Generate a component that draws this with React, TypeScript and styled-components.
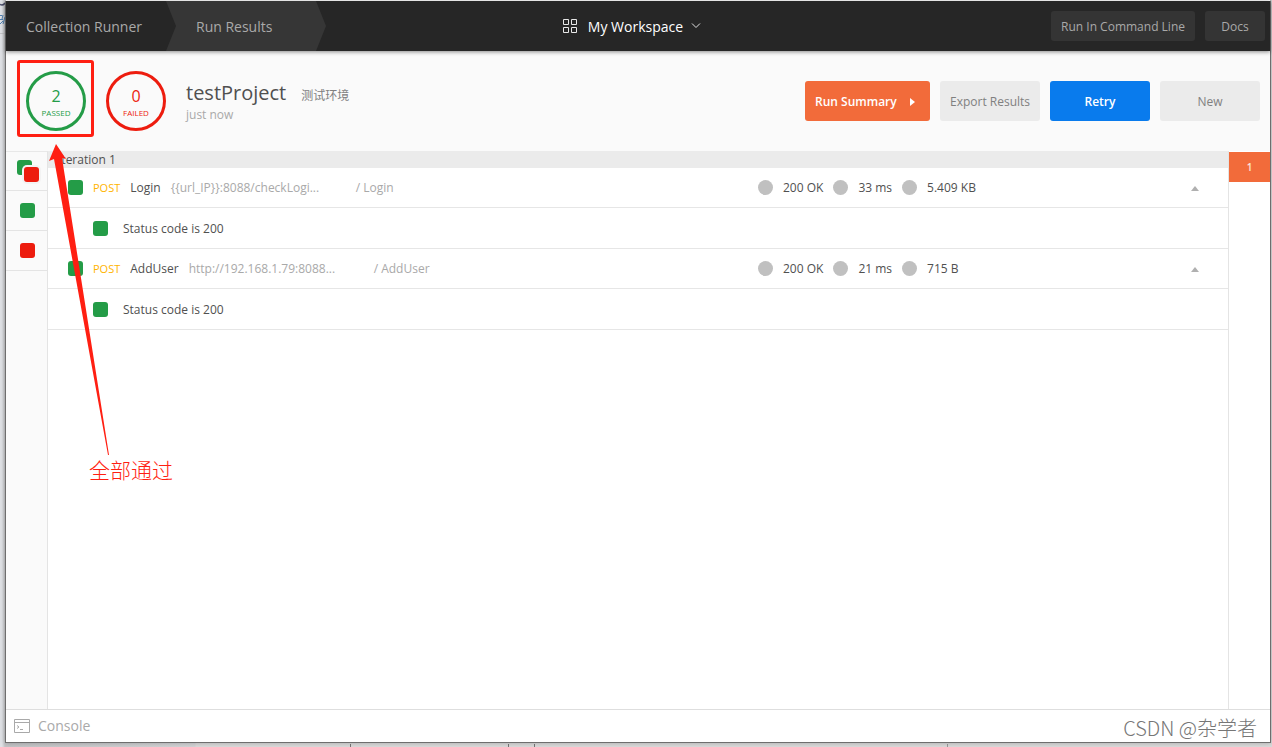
import React from "react";
import styled, { createGlobalStyle } from "styled-components";

const GREEN = "#249c47";
const RED = "#ed1c0e";
const MARK = "#ff1f12";
const ORANGE = "#f26b3a";

const GlobalStyle = createGlobalStyle`
  * { box-sizing: border-box; }
  body {
    margin: 0;
    background: #d9dadc;
    font-family: "Open Sans", "Noto Sans CJK SC", sans-serif;
    font-size: 12px;
    line-height: 16px;
    color: #505050;
  }
  button { font: inherit; border: 0; padding: 0; cursor: pointer; }
  a { color: inherit; text-decoration: none; }
  h1, p { margin: 0; font-weight: 400; }
`;

const Desktop = styled.div`
  position: relative;
  display: flex;
  min-height: 100vh;
  padding: 0 1px 4px 5px;
  overflow: hidden;
  background: linear-gradient(90deg, #dfe1e5 0 2px, #c2c3c5 5px, #d3d4d6 195px, #dadada 196px);
`;

const Behind = styled.svg`
  position: absolute;
  left: 0;
  top: 0;
`;

const BehindTicks = styled.div`
  position: absolute;
  left: 0;
  right: 0;
  bottom: 0;
  height: 3px;
  background:
    linear-gradient(#777, #777) 27.5% 0 / 1px 3px no-repeat,
    linear-gradient(#777, #777) 40% 0 / 1px 3px no-repeat,
    linear-gradient(#777, #777) 42% 0 / 1px 3px no-repeat,
    linear-gradient(#999, #999) 74.5% 0 / 1px 3px no-repeat;
`;

const Window = styled.div`
  position: relative;
  flex: 1;
  display: flex;
  flex-direction: column;
  background: #fff;
  border: 1px solid #6e6e6e;
  border-top-color: #fff;
  box-shadow: 0 0 5px rgba(0, 0, 0, 0.25);
`;

const Header = styled.header`
  position: relative;
  z-index: 1;
  display: grid;
  grid-template-columns: 1fr auto 1fr;
  align-items: center;
  height: 50px;
  background: #262626;
  box-shadow: 0 1px 4px rgba(0, 0, 0, 0.45);
`;

const Crumbs = styled.nav`
  display: flex;
  font-size: 14px;
  line-height: 52px;
  color: #a9a9a9;
`;

const Crumb = styled.a<{ $active?: boolean }>`
  width: ${(p) => (p.$active ? 160 : 170)}px;
  height: 50px;
  margin-right: -10px;
  padding-left: ${(p) => (p.$active ? 30 : 20)}px;
  background: ${(p) => (p.$active ? "#363636" : "transparent")};
  clip-path: ${(p) =>
    p.$active
      ? "polygon(0 0, calc(100% - 10px) 0, 100% 50%, calc(100% - 10px) 100%, 0 100%, 10px 50%)"
      : "none"};
`;

const Workspace = styled.button`
  display: flex;
  align-items: center;
  gap: 8px;
  padding-right: 12px;
  background: none;
  color: #fff;
  font-size: 14px;
  font-weight: 500;
`;

const WorkspaceName = styled.span`
  padding: 2px 0 0 2px;
`;

const HeaderActions = styled.div`
  display: flex;
  justify-content: flex-end;
  gap: 10px;
  padding-right: 5px;
`;

const HeaderButton = styled.button`
  min-width: 60px;
  height: 30px;
  padding: 2px 10px 0;
  border-radius: 3px;
  background: #343434;
  color: #a9a9a9;
`;

const Summary = styled.section`
  display: flex;
  align-items: center;
  height: 100px;
  padding: 0 10px 0 20px;
  background: #fafafa;
`;

const Count = styled.div<{ $color: string }>`
  display: flex;
  flex-direction: column;
  align-items: center;
  width: 60px;
  height: 60px;
  margin-right: 20px;
  padding-top: 11px;
  border: 3px solid ${(p) => p.$color};
  border-radius: 50%;
  color: ${(p) => p.$color};
`;

const CountValue = styled.span`
  font-size: 16px;
  line-height: 22px;
`;

const CountLabel = styled.span`
  font-size: 8px;
  line-height: 11px;
`;

const RunInfo = styled.div`
  flex: 1;
`;

const TitleLine = styled.div`
  display: flex;
  align-items: baseline;
  gap: 15px;
`;

const Title = styled.h1`
  font-size: 20px;
  line-height: 28px;
`;

const Environment = styled.span`
  color: #808080;
`;

const When = styled.p`
  color: #a9a9a9;
`;

const Actions = styled.div`
  display: flex;
  gap: 10px;
`;

const ActionButton = styled.button<{ $tone?: "orange" | "blue" }>`
  display: flex;
  align-items: center;
  justify-content: ${(p) => (p.$tone === "orange" ? "flex-start" : "center")};
  gap: 13px;
  width: ${(p) => (p.$tone === "orange" ? 125 : 100)}px;
  height: 40px;
  padding: 2px 10px 0;
  border-radius: 3px;
  white-space: nowrap;
  font-weight: ${(p) => (p.$tone ? 600 : 400)};
  background: ${(p) => (p.$tone === "orange" ? ORANGE : p.$tone === "blue" ? "#097bed" : "#ebebeb")};
  color: ${(p) => (p.$tone ? "#fff" : "#808080")};
`;

const Body = styled.main`
  flex: 1;
  display: flex;
`;

const Filters = styled.aside`
  width: 42px;
  background: #fafafa;
  border-top: 1px solid #e8e8e8;
  border-right: 1px solid #e4e4e4;
`;

const FilterButton = styled.button`
  display: flex;
  align-items: center;
  justify-content: center;
  width: 100%;
  height: 40px;
  padding-left: 2px;
  background: none;
  border-bottom: 1px solid #e4e4e4;

  &:first-child { height: 39px; }
`;

const Square = styled.span<{ $color: string }>`
  flex: none;
  width: 15px;
  height: 15px;
  border-radius: 3px;
  background: ${(p) => p.$color};
`;

const StackedSquares = styled.span`
  position: relative;
  display: flex;
  width: 22px;
  height: 22px;

  ${Square} + ${Square} {
    position: absolute;
    right: 0;
    bottom: 0;
    box-shadow: 0 0 0 2px #f3f3f3;
  }
`;

const Results = styled.section`
  flex: 1;
`;

const IterationTitle = styled.div`
  height: 17px;
  padding-left: 10px;
  line-height: 17px;
  background: #ebebeb;
`;

const RequestRow = styled.div`
  display: grid;
  grid-template-columns: 3fr 2fr;
  align-items: center;
  height: 40px;
  border-bottom: 1px solid #e6e6e6;
`;

const RequestInfo = styled.div`
  display: flex;
  align-items: center;
  gap: 10px;
  padding-left: 20px;
`;

const Method = styled.span`
  font-size: 11px;
  color: #ffb400;
`;

const Url = styled.span`
  width: 175px;
  color: #a9a9a9;
`;

const Path = styled.span`
  color: #a9a9a9;
`;

const Stats = styled.div`
  display: flex;
  align-items: center;
  gap: 10px;
  padding: 0 28px 0 2px;
`;

const Dot = styled.span`
  width: 15px;
  height: 15px;
  border-radius: 50%;
  background: #c0c0c0;
`;

const Collapse = styled.button`
  display: flex;
  margin-left: auto;
  background: none;
`;

const TestRow = styled.div`
  display: flex;
  align-items: center;
  gap: 15px;
  height: 41px;
  padding-left: 45px;
  border-bottom: 1px solid #e6e6e6;
`;

const TestName = styled.span`
  padding-top: 2px;
`;

const Iterations = styled.aside`
  width: 42px;
  padding-top: 1px;
  border-left: 1px solid #e4e4e4;
`;

const IterationButton = styled.button`
  width: 100%;
  height: 30px;
  background: ${ORANGE};
  color: #fbe3da;
  font-size: 10px;
  font-weight: 600;
`;

const Footer = styled.footer`
  display: flex;
  align-items: center;
  height: 33px;
  padding: 0 8px;
  border-top: 1px solid #dedede;
`;

const ConsoleButton = styled.button`
  display: flex;
  align-items: center;
  gap: 8px;
  background: none;
  color: #a9a9a9;
  font-size: 14px;
`;

const Highlight = styled.div`
  position: absolute;
  z-index: 2;
  left: 11px;
  top: 59px;
  width: 77px;
  height: 77px;
  border: 3px solid ${MARK};
  border-radius: 3px;
`;

const Arrow = styled.svg`
  position: absolute;
  z-index: 2;
  left: 42px;
  top: 142px;
  pointer-events: none;
`;

const Note = styled.div`
  position: absolute;
  z-index: 2;
  left: 83px;
  top: 453px;
  font-family: "Noto Sans CJK SC", sans-serif;
  font-size: 21px;
  font-weight: 300;
  line-height: 30px;
  color: ${MARK};
`;

const Watermark = styled.div`
  position: absolute;
  right: 13px;
  bottom: 0;
  font-family: "Noto Sans CJK SC", sans-serif;
  font-size: 20px;
  font-weight: 300;
  line-height: 28px;
  color: #767676;
`;

const requests = [
  { name: "Login", url: "{{url_IP}}:8088/checkLogi...", path: "/ Login", status: "200 OK", time: "33 ms", size: "5.409 KB" },
  { name: "AddUser", url: "http://192.168.1.79:8088...", path: "/ AddUser", status: "200 OK", time: "21 ms", size: "715 B" },
];

export default function App() {
  return (
    <Desktop>
      <GlobalStyle />
      <Behind width="5" height="36" fill="none" aria-hidden="true">
        <path d="M0 4.5Q3 6 5 3" stroke="#4a4d68" strokeWidth="1.5" />
        <path d="M0 15.5h2M0 19.5h3M3 15l-1 4M5 17l-2 7M0 24l3-3" stroke="#4f7fb0" />
        <path d="M0 33.5h5" stroke="#c4c5c8" />
      </Behind>
      <BehindTicks />
      <Window>
        <Header>
          <Crumbs>
            <Crumb href="#runner">Collection Runner</Crumb>
            <Crumb href="#results" $active>Run Results</Crumb>
          </Crumbs>
          <Workspace>
            <svg width="15" height="15" fill="none" stroke="#e8e8e8" aria-hidden="true">
              <path d="M.5.5h5v5h-5zM8.500.5h5v5h-5zM.5 8.500h5v5h-5zM8.500 8.500h5v5h-5z" />
            </svg>
            <WorkspaceName>My Workspace</WorkspaceName>
            <svg width="10" height="6" fill="none" stroke="#e0e0e0" aria-hidden="true">
              <path d="M1 .5l4 4 4-4" />
            </svg>
          </Workspace>
          <HeaderActions>
            <HeaderButton>Run In Command Line</HeaderButton>
            <HeaderButton>Docs</HeaderButton>
          </HeaderActions>
        </Header>

        <Summary>
          <Count $color={GREEN}>
            <CountValue>2</CountValue>
            <CountLabel>PASSED</CountLabel>
          </Count>
          <Count $color={RED}>
            <CountValue>0</CountValue>
            <CountLabel>FAILED</CountLabel>
          </Count>
          <RunInfo>
            <TitleLine>
              <Title>testProject</Title>
              <Environment>测试环境</Environment>
            </TitleLine>
            <When>just now</When>
          </RunInfo>
          <Actions>
            <ActionButton $tone="orange">
              Run Summary
              <svg width="5" height="8" aria-hidden="true"><path d="M0 0l5 4-5 4z" fill="#fff" /></svg>
            </ActionButton>
            <ActionButton>Export Results</ActionButton>
            <ActionButton $tone="blue">Retry</ActionButton>
            <ActionButton>New</ActionButton>
          </Actions>
        </Summary>

        <Body>
          <Filters>
            <FilterButton aria-label="All tests">
              <StackedSquares>
                <Square $color={GREEN} />
                <Square $color={RED} />
              </StackedSquares>
            </FilterButton>
            <FilterButton aria-label="Passed tests"><Square $color={GREEN} /></FilterButton>
            <FilterButton aria-label="Failed tests"><Square $color={RED} /></FilterButton>
          </Filters>
          <Results>
            <IterationTitle>Iteration 1</IterationTitle>
            {requests.map((r) => (
              <React.Fragment key={r.name}>
                <RequestRow>
                  <RequestInfo>
                    <Square $color={GREEN} />
                    <Method>POST</Method>
                    <span>{r.name}</span>
                    <Url>{r.url}</Url>
                    <Path>{r.path}</Path>
                  </RequestInfo>
                  <Stats>
                    <Dot />
                    <span>{r.status}</span>
                    <Dot />
                    <span>{r.time}</span>
                    <Dot />
                    <span>{r.size}</span>
                    <Collapse aria-label={`Collapse ${r.name}`}>
                      <svg width="10" height="7" aria-hidden="true"><path d="M1 7l4-5 4 5z" fill="#b0b0b0" /></svg>
                    </Collapse>
                  </Stats>
                </RequestRow>
                <TestRow>
                  <Square $color={GREEN} />
                  <TestName>Status code is 200</TestName>
                </TestRow>
              </React.Fragment>
            ))}
          </Results>
          <Iterations>
            <IterationButton>1</IterationButton>
          </Iterations>
        </Body>

        <Footer>
          <ConsoleButton>
            <svg width="16" height="14" fill="none" stroke="#a9a9a9" aria-hidden="true">
              <path d="M.5.5h15v13H.5zM.5 3.500h15M3 6.500l2 1.500-2 1.500M6 10.500h3" />
            </svg>
            Console
          </ConsoleButton>
        </Footer>

        <Highlight />
        <Arrow width="64" height="314" aria-hidden="true">
          <path d="M8 1L1 18L6 16L60 312L61 312L14 15L18 16Z" fill={MARK} />
        </Arrow>
        <Note>全部通过</Note>
        <Watermark>CSDN @杂学者</Watermark>
      </Window>
    </Desktop>
  );
}
